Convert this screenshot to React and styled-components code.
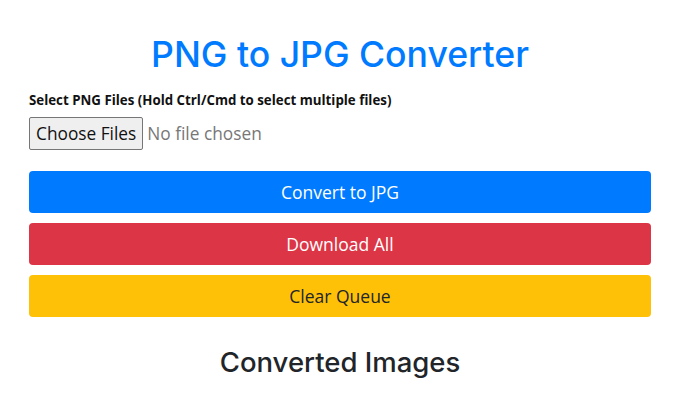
import React from "react";
import styled, { createGlobalStyle } from "styled-components";

const GlobalStyle = createGlobalStyle`
  body {
    margin: 0;
    background: #fff;
    font-family: "Open Sans", "Liberation Sans", sans-serif;
    color: #212529;
  }
`;

const Page = styled.div`
  padding: 34px 23px 0 29px;
`;

const Title = styled.h1`
  margin: 0 0 14px;
  text-align: center;
  font-family: Inter, "Liberation Sans", sans-serif;
  font-weight: 500;
  font-size: 35.6px;
  line-height: 1.2;
  color: #007bff;
`;

const Label = styled.label`
  display: block;
  margin-bottom: 8px;
  font-size: 13.3px;
  font-weight: 700;
  color: #111;
`;

const FileInput = styled.input`
  display: block;
  font-family: "Open Sans", sans-serif;
  font-size: 17.3px;
  color: #777;
  margin-bottom: 21px;

  &::file-selector-button {
    font: inherit;
    color: #111;
    background: #efefef;
    border: 1px solid #767676;
    border-radius: 2px;
    padding: 4px 6px;
    margin-right: 4px;
  }
`;

const Actions = styled.div`
  display: flex;
  flex-direction: column;
  gap: 10px;
`;

const Button = styled.button`
  width: 100%;
  height: 42px;
  border: none;
  border-radius: 4px;
  font-family: "Open Sans", sans-serif;
  font-size: 17.5px;
  background: ${(p) => p.$bg};
  color: ${(p) => p.$fg || "#fff"};
`;

const Subtitle = styled.h2`
  margin: 28px 0 0;
  text-align: center;
  font-family: Inter, "Liberation Sans", sans-serif;
  font-weight: 500;
  font-size: 27.5px;
  color: #212529;
`;

export default function App() {
  return (
    <>
      <GlobalStyle />
      <Page>
        <Title>PNG to JPG Converter</Title>
        <Label htmlFor="files">
          Select PNG Files (Hold Ctrl/Cmd to select multiple files)
        </Label>
        <FileInput id="files" type="file" accept="image/png" multiple />
        <Actions>
          <Button $bg="#007bff">Convert to JPG</Button>
          <Button $bg="#dc3545">Download All</Button>
          <Button $bg="#ffc107" $fg="#212529">
            Clear Queue
          </Button>
        </Actions>
        <Subtitle>Converted Images</Subtitle>
      </Page>
    </>
  );
}
